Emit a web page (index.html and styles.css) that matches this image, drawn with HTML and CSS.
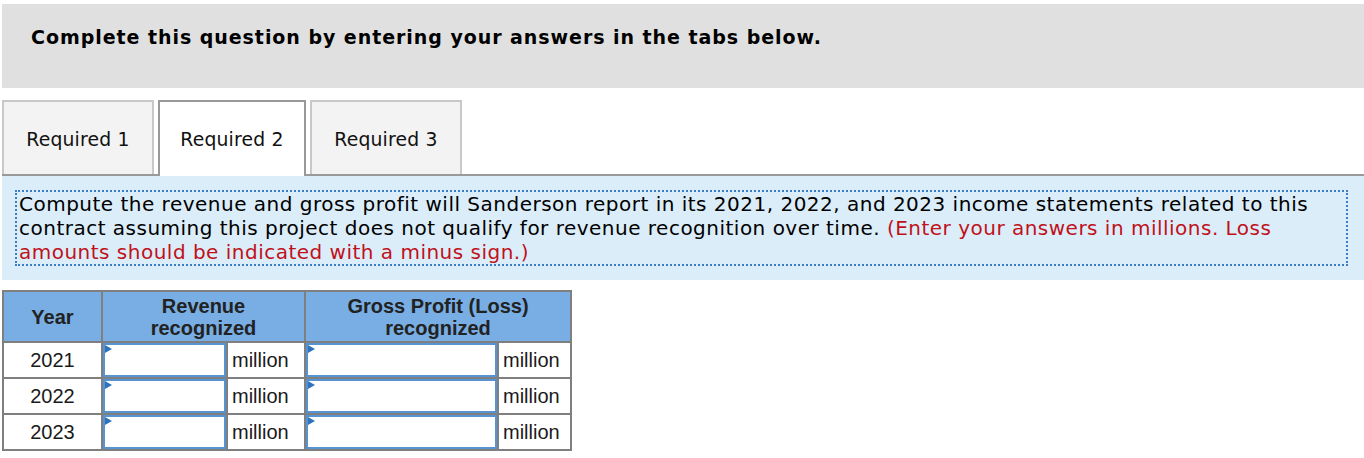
FILE: index.html
```html
<!DOCTYPE html>
<html>
<head>
<meta charset="utf-8">
<link rel="stylesheet" href="styles.css">
</head>
<body>
<div class="page">
  <div class="banner">Complete this question by entering your answers in the tabs below.</div>
  <div class="tabs">
    <div class="tab">Required 1</div>
    <div class="tab active">Required 2</div>
    <div class="tab">Required 3</div>
  </div>
  <div class="panel">
    <div class="prompt">Compute the revenue and gross profit will Sanderson report in its 2021, 2022, and 2023 income statements related to this contract assuming this project does not qualify for revenue recognition over time. <span class="note">(Enter your answers in millions. Loss amounts should be indicated with a minus sign.)</span></div>
  </div>
  <table class="grid">
    <colgroup>
      <col class="c-year"><col class="c-in1"><col class="c-unit1"><col class="c-in2"><col class="c-unit2">
    </colgroup>
    <thead>
      <tr><th>Year</th><th colspan="2">Revenue<br>recognized</th><th colspan="2">Gross Profit (Loss)<br>recognized</th></tr>
    </thead>
    <tbody>
      <tr><td class="yr">2021</td><td class="in"><div class="box"></div></td><td class="unit">million</td><td class="in"><div class="box"></div></td><td class="unit">million</td></tr>
      <tr><td class="yr">2022</td><td class="in"><div class="box"></div></td><td class="unit">million</td><td class="in"><div class="box"></div></td><td class="unit">million</td></tr>
      <tr><td class="yr">2023</td><td class="in"><div class="box"></div></td><td class="unit">million</td><td class="in"><div class="box"></div></td><td class="unit">million</td></tr>
    </tbody>
  </table>
</div>
</body>
</html>
```

FILE: styles.css
```css
html, body { margin: 0; padding: 0; background: #fff; }
.page { padding-top: 4px; padding-left: 2px; }
.banner {
  background: #e0e0e0;
  height: 84px;
  box-sizing: border-box;
  padding: 21px 0 0 29px;
  font-family: "DejaVu Sans", Verdana, sans-serif;
  font-weight: bold;
  font-size: 19px;
  letter-spacing: 0.95px;
  line-height: 24px;
  color: #000;
}
.tabs {
  margin-top: 12px;
  display: flex;
  gap: 4px;
  border-bottom: 2px solid #999;
  height: 74px;
  box-sizing: content-box;
}
.tab {
  box-sizing: border-box;
  width: 152px;
  height: 74px;
  border: 2px solid #c8c8c8;
  border-bottom: none;
  background: #f3f3f3;
  font-family: "DejaVu Sans", Verdana, sans-serif;
  font-size: 18.8px;
  letter-spacing: 0.2px;
  line-height: 24px;
  color: #111;
  text-align: center;
  padding-top: 26px;
}
.tab.active {
  width: 148px;
  height: 76px;
  background: #fff;
  border-color: #999;
  margin-bottom: -2px;
}
.panel {
  background: #dbedf9;
  padding: 14px 16px 14px 13px;
}
.prompt {
  border: 2px dotted #3a7cc6;
  padding: 0 0 0 2px;
  font-family: "DejaVu Sans", Verdana, sans-serif;
  font-size: 20px;
  letter-spacing: 0.49px;
  line-height: 24px;
  color: #000;
}
.note { color: #c0111b; }
.grid {
  margin-top: 10px;
  border-collapse: collapse;
  font-family: "Liberation Sans", Arial, sans-serif;
  font-size: 20px;
  color: #1a1a1a;
}
.c-year { width: 99px; }
.c-in1 { width: 125px; }
.c-unit1 { width: 78px; }
.c-in2 { width: 193px; }
.c-unit2 { width: 73px; }
.grid th, .grid td { border: 2px solid #7f7f7f; padding: 0; }
.grid th {
  background: #78aee3;
  font-weight: bold;
  line-height: 22px;
  height: 49px;
  color: #222;
}
.grid td { height: 34px; background: #fff; }
.yr { text-align: center; }
.unit { padding-left: 4px !important; text-align: left; }
.in { padding: 0 !important; }
.box {
  position: relative;
  height: 30px;
  border: 2px solid #5593d2;
  background: #fff;
}
.box::before {
  content: "";
  position: absolute;
  left: 0;
  top: 0;
  border-left: 7px solid #2f72bd;
  border-top: 4px solid transparent;
  border-bottom: 4px solid transparent;
}
```
